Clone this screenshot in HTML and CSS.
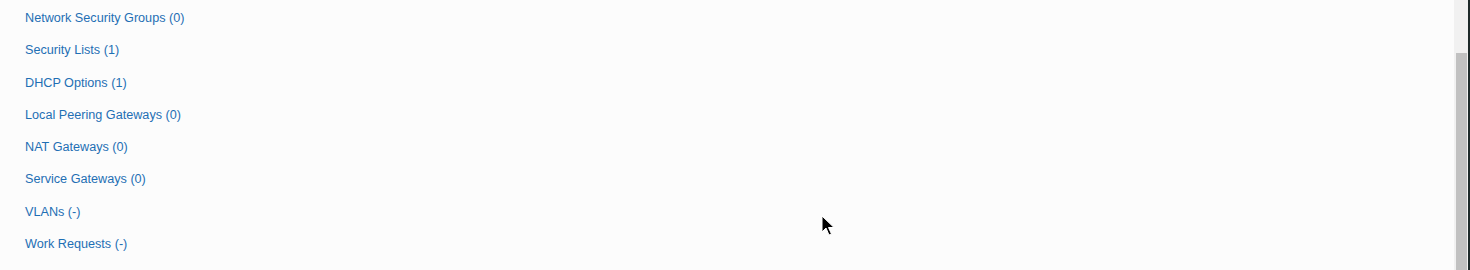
FILE: index.html
```html
<!DOCTYPE html>
<html lang="en">
<head>
  <meta charset="UTF-8">
  <title>Resources</title>
  <link rel="stylesheet" href="styles.css">
</head>
<body>
  <div class="page">
    <div class="content">
      <ul class="resource-list">
        <li><a href="#">Network Security Groups (0)</a></li>
        <li><a href="#">Security Lists (1)</a></li>
        <li><a href="#">DHCP Options (1)</a></li>
        <li><a href="#">Local Peering Gateways (0)</a></li>
        <li><a href="#">NAT Gateways (0)</a></li>
        <li><a href="#">Service Gateways (0)</a></li>
        <li><a href="#">VLANs (-)</a></li>
        <li><a href="#">Work Requests (-)</a></li>
      </ul>
    </div>
    <div class="scrollbar">
      <div class="thumb"></div>
    </div>
    <div class="edge"></div>
  </div>

  <svg class="cursor" width="14" height="22" viewBox="0 0 14 22">
    <path d="M1 1 L1 17 L5 13 L8 20 L10.5 19 L7.5 12.5 L13 12.5 Z" fill="#000" stroke="#fff" stroke-width="1"/>
  </svg>
</body>
</html>
```

FILE: styles.css
```css
* {
  margin: 0;
  padding: 0;
  box-sizing: border-box;
}

html, body {
  height: 100%;
}

body {
  font-family: "Liberation Sans", Arial, sans-serif;
  background-color: #fcfcfc;
  overflow: hidden;
}

.page {
  display: flex;
  height: 270px;
}

.content {
  flex: 1;
  padding: 1.8px 0 0 25px;
}

.resource-list {
  list-style-type: none;
}

.resource-list li {
  height: 32.3px;
  display: flex;
  align-items: center;
}

.resource-list a {
  color: #1f6fb4;
  font-size: 12.65px;
  text-decoration: none;
}

.scrollbar {
  width: 14px;
  background-color: #f1f1f1;
  padding: 53px 1px 0 2px;
}

.thumb {
  height: 100%;
  background-color: #c1c1c1;
}

.edge {
  width: 2px;
  background-color: #1e2a2a;
}

.cursor {
  position: absolute;
  left: 821px;
  top: 215px;
}
```
